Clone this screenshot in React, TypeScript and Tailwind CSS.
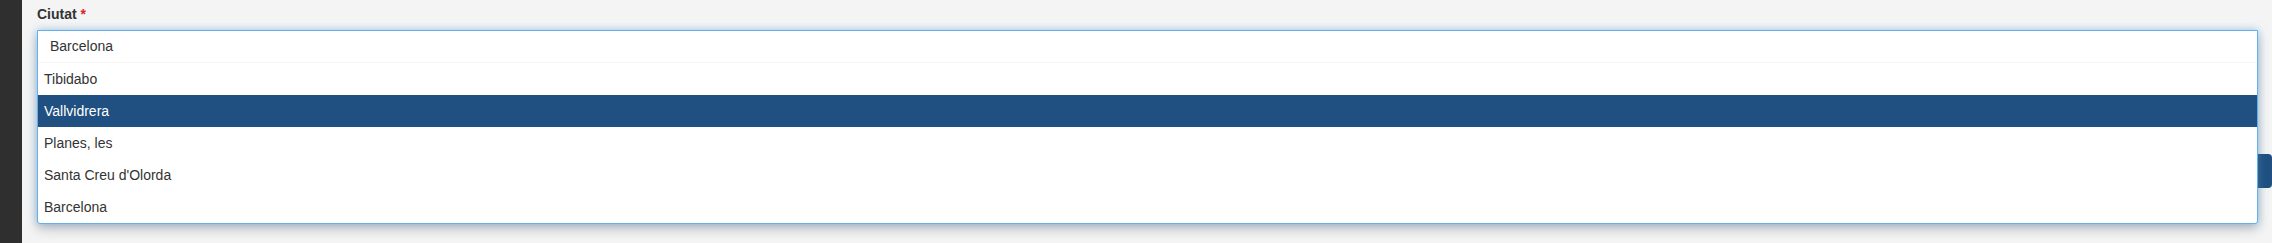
import React from "react";

const items = ["Tibidabo", "Vallvidrera", "Planes, les", "Santa Creu d'Olorda", "Barcelona"];

export default function App() {
  return (
    <div className="flex min-h-[243px] bg-[#f4f4f4] font-['Liberation_Sans',Arial,sans-serif] text-[14px] text-[#333]">
      <div className="w-[22px] shrink-0 bg-[#2f2f2f]" />
      <div className="relative flex-1 pl-[15px] pr-[14px] pt-[4px]">
        <label className="block h-[20px] mb-[6px] text-[14px] leading-[20px] font-bold text-[#333]">
          Ciutat <span className="text-[#e02020]">*</span>
        </label>
        <div className="absolute right-0 top-[154px] flex h-[34px] w-[60px] items-center rounded-[4px] bg-[#1f5081] pl-[28px] text-[12px] leading-none text-white">
          ›
        </div>
        <div className="relative z-10 rounded-b-[3px] border border-[#66afe9] bg-white shadow-[0_6px_12px_rgba(0,0,0,0.175),0_0_8px_rgba(102,175,233,0.6)]">
          <div className="flex h-[32px] items-center border-b border-[#f6f6f6] pl-[12px] text-[14px] text-[#333]">
            Barcelona
          </div>
          {items.map((it, i) => (
            <div
              key={i}
              className={
                i === 1
                  ? "flex h-[32px] items-center bg-[#1f5081] pl-[6px] text-white"
                  : "flex h-[32px] items-center pl-[6px] text-[#333]"
              }
            >
              {it}
            </div>
          ))}
        </div>
      </div>
    </div>
  );
}
